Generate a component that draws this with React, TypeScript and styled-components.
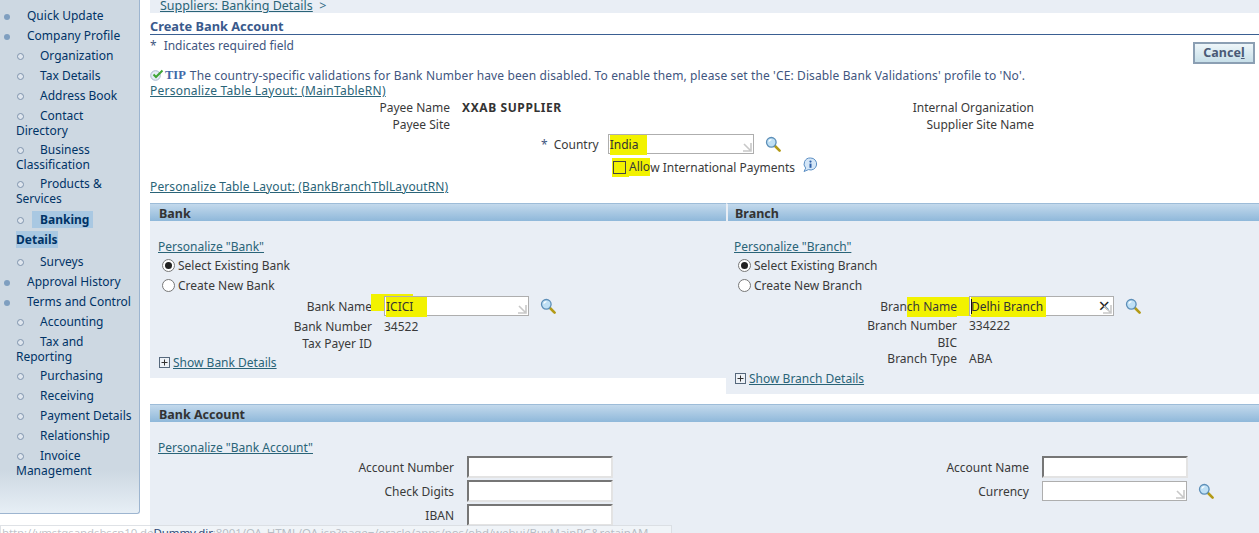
import React from "react";
import styled, { createGlobalStyle } from "styled-components";

const Global = createGlobalStyle`
  html, body { margin: 0; padding: 0; height: 533px; overflow: hidden; background: #fff; }
  #root { height: 533px; }
`;

const Page = styled.div`
  position: relative;
  display: flex;
  align-items: flex-start;
  width: 1259px;
  height: 533px;
  overflow: hidden;
  font-family: "Noto Sans", "Open Sans", sans-serif;
  font-size: 12px;
  line-height: 15px;
  color: #3a3a3a;
`;

const Sidebar = styled.nav`
  flex: none;
  box-sizing: border-box;
  width: 140px;
  height: 514px;
  padding-top: 8px;
  background: linear-gradient(#cdd8e2 0, #cdd8e2 470px, #e6eef5 512px);
  border-right: 1px solid #9db5d0;
  border-bottom: 1px solid #9db5d0;
  border-bottom-right-radius: 3px;
  color: #003366;
`;

const NavRow = styled.div<{ $level: number; $wrapped?: boolean }>`
  padding: 0 5px ${(p) => (p.$wrapped ? 4 : 5)}px ${(p) => (p.$level === 1 ? 3 : 16)}px;
`;

const Dot = styled.i<{ $level: number }>`
  display: inline-block;
  box-sizing: border-box;
  width: ${(p) => (p.$level === 1 ? 6 : 7)}px;
  height: ${(p) => (p.$level === 1 ? 6 : 7)}px;
  margin-right: ${(p) => (p.$level === 1 ? 17 : 16)}px;
  margin-left: 1px;
  vertical-align: 0;
  border-radius: 50%;
  ${(p) =>
    p.$level === 1
      ? "background:#7f9fc0;"
      : "border:1px solid #7f93ad;background:#dfe6ee;"}
`;

const Current = styled.b`
  padding-left: 8px;
  margin-left: -8px;
  background: #a9c8e2;
  color: #003366;
`;

const CurrentRow = styled(NavRow)`
  padding-right: 30px;
  padding-bottom: 4px;
  line-height: 20px;
`;

const Main = styled.main`
  flex: 1;
  min-width: 0;
  margin-left: 10px;
`;

const Crumbs = styled.div`
  height: 13px;
  overflow: hidden;
  padding-left: 10px;
  background: #e9eef5;
  font-size: 12.5px;
  line-height: 11px;
  color: #336b85;
`;

const A = styled.a<{ $spread?: number }>`
  color: #2a6478;
  text-decoration: underline;
  letter-spacing: ${(p) => p.$spread ?? 0}px;
`;

const Title = styled.h1`
  margin: 5px 0 0;
  height: 16px;
  font-size: 12.8px;
  line-height: 16px;
  font-weight: 700;
  color: #3a5a8c;
  border-bottom: 1px solid #3a5f92;
`;

const Required = styled.div`
  display: flex;
  justify-content: space-between;
  align-items: flex-start;
  height: 21px;
  padding: 3px 4px 0 0;
  color: #3f5680;
`;

const Star = styled.span`
  margin-right: 7px;
`;

const CancelButton = styled.button`
  flex: none;
  width: 62px;
  height: 22px;
  margin-top: 4px;
  padding: 0;
  border: 2px solid #8b9fb3;
  background: linear-gradient(#eef6f9, #c7dfe9);
  font: 700 12.5px/16px "Noto Sans", sans-serif;
  color: #4a5a76;
`;

const U = styled.span`
  text-decoration: underline;
`;

const Tip = styled.div`
  display: flex;
  align-items: center;
  height: 16px;
  margin-top: 8px;
  color: #3f5680;
  white-space: nowrap;
  letter-spacing: 0.12px;
`;

const TipWord = styled.b`
  margin: 0 4px 0 0;
  font-family: "Liberation Serif", serif;
  font-size: 12.5px;
  letter-spacing: 0;
  color: #3f68a8;
`;

const Line = styled.div<{ $h?: number }>`
  height: ${(p) => p.$h ?? 16}px;
  white-space: nowrap;
`;

const Payee = styled.div`
  display: grid;
  grid-template-columns: 300px 398px 162px 1fr;
  column-gap: 12px;
  grid-auto-rows: 17px;
  padding-top: 1px;
  height: 33px;
`;

const Label = styled.div`
  text-align: right;
  white-space: nowrap;
`;

const Strong = styled.b`
  color: #333;
  letter-spacing: 0.6px;
`;

const CountryRow = styled.div`
  display: flex;
  align-items: center;
  height: 22px;
  padding-left: 391px;
`;

const Req = styled.span`
  margin-right: 6px;
  color: #3f5680;
`;

const CountryLabel = styled.span`
  margin-right: 9px;
`;

const ComboBox = styled.div<{ $w?: number }>`
  position: relative;
  box-sizing: border-box;
  width: ${(p) => p.$w ?? 146}px;
  height: 20px;
  margin-right: 11px;
  padding: 2px 0 0 1px;
  background: #fff;
  border: 1px solid #aeaeae;
  line-height: 16px;
  white-space: nowrap;
  color: #333;
`;

const Corner = styled.svg`
  position: absolute;
  right: 1px;
  bottom: 1px;
`;

const Mark = styled.mark`
  background: #f2f200;
  color: inherit;
  padding: 1px 0 2px;
`;

const Tail = styled(Mark)<{ $tail: number }>`
  padding-right: ${(p) => p.$tail}px;
`;

const Swipe = styled.span<{ $left: number; $top: number; $w: number; $h: number }>`
  position: absolute;
  left: ${(p) => p.$left}px;
  top: ${(p) => p.$top}px;
  width: ${(p) => p.$w}px;
  height: ${(p) => p.$h}px;
  background: #f2f200;
`;

const ClearX = styled.span`
  position: absolute;
  right: 3px;
  top: 1px;
  font-size: 20px;
  line-height: 16px;
  color: #222;
`;

const Caret = styled.span`
  position: absolute;
  left: 1px;
  top: 2px;
  width: 1px;
  height: 15px;
  background: #111;
`;

const AllowRow = styled.div`
  display: flex;
  align-items: center;
  height: 24px;
  padding-left: 462px;
`;

const CheckMark = styled.span`
  display: inline-flex;
  align-items: center;
  padding-left: 1px;
  box-sizing: border-box;
  width: 17px;
  height: 19px;
  background: #f2f200;
`;

const Check = styled.span`
  display: block;
  box-sizing: border-box;
  width: 13px;
  height: 13px;
  border: 1px solid #444;
`;

const InfoWrap = styled.span`
  display: inline-flex;
  margin: 0 0 4px 7px;
`;

const Columns = styled.div`
  display: grid;
  grid-template-columns: 576px 1fr;
  align-items: start;
`;

const SectionHead = styled.h2<{ $divider?: boolean }>`
  margin: 0;
  box-sizing: border-box;
  height: 18px;
  padding-left: ${(p) => (p.$divider ? 7 : 9)}px;
  background: linear-gradient(#c3d9ec, #8fb8da);
  border-top: 1px solid #9dbcd8;
  ${(p) => (p.$divider ? "border-left: 2px solid #e9eef5;" : "")}
  font-size: 12.5px;
  line-height: 19px;
  font-weight: 700;
  color: #333;
`;

const SectionBody = styled.div<{ $h: number; $pad: number }>`
  box-sizing: border-box;
  height: ${(p) => p.$h}px;
  padding: 18px 0 0 ${(p) => p.$pad}px;
  background: #e9eef5;
`;

const RadioRow = styled.label`
  display: flex;
  align-items: center;
  height: 20px;
  padding-left: 4px;
  white-space: nowrap;
`;

const Radio = styled.span<{ $on?: boolean }>`
  display: inline-flex;
  align-items: center;
  justify-content: center;
  box-sizing: border-box;
  width: 13px;
  height: 13px;
  margin-right: 3px;
  border: 1px solid #777;
  border-radius: 50%;
  background: #fff;
  &::after {
    content: "";
    width: 7px;
    height: 7px;
    border-radius: 50%;
    background: ${(p) => (p.$on ? "#222" : "transparent")};
  }
`;

const FormRow = styled.div<{ $label: number; $h?: number }>`
  display: grid;
  grid-template-columns: ${(p) => p.$label}px auto;
  column-gap: 12px;
  align-items: center;
  justify-content: start;
  height: ${(p) => p.$h ?? 16}px;
  white-space: nowrap;
`;

const FieldRow = styled.div`
  position: relative;
  display: flex;
  align-items: center;
`;

const Disclosure = styled.div`
  display: flex;
  align-items: center;
  padding-left: 1px;
`;

const Plus = styled.svg`
  margin-right: 3px;
`;

const Spacer = styled.div<{ $h: number }>`
  height: ${(p) => p.$h}px;
`;

const Account = styled.div`
  display: grid;
  grid-template-columns: 304px 146px 403px 1fr;
  column-gap: 13px;
  grid-auto-rows: 24px;
  align-items: center;
  margin-left: -8px;
`;

const TextBox = styled.div`
  box-sizing: border-box;
  width: 146px;
  height: 22px;
  background: #fff;
  border: 2px solid;
  border-color: #767676 #e3e3e3 #e3e3e3 #767676;
`;

const StatusBar = styled.div`
  position: absolute;
  left: 0;
  bottom: -4px;
  box-sizing: border-box;
  width: 672px;
  height: 12px;
  padding-left: 1px;
  border: 1px solid rgba(210, 214, 220, 0.7);
  background: rgba(255, 255, 255, 0.35);
  font-size: 11.5px;
  letter-spacing: -0.1px;
  line-height: 14px;
  white-space: nowrap;
  overflow: hidden;
  color: rgba(90, 100, 115, 0.4);
`;

const StatusDark = styled.span`
  color: #2f4a78;
`;

const Lens = () => (
  <svg width="16" height="16" viewBox="0 0 16 16" aria-hidden="true">
    <path d="M10 10l4.6 4.6" stroke="#b39a16" strokeWidth="2.6" strokeLinecap="round" />
    <circle cx="6.3" cy="6.3" r="4.8" fill="#bfe0f5" stroke="#5d8fb8" strokeWidth="1.3" />
    <path d="M3.8 5.6a3 3 0 0 1 2.6-2" stroke="#fff" strokeWidth="1.2" fill="none" />
  </svg>
);

const Grip = () => (
  <Corner width="10" height="10" viewBox="0 0 10 10" aria-hidden="true">
    <path d="M1 9h8V1M2 2l7 7" stroke="#c8c8c8" strokeWidth="1.6" fill="none" />
  </Corner>
);

const PlusBox = () => (
  <Plus width="11" height="11" viewBox="0 0 11 11" aria-hidden="true">
    <rect x=".5" y=".5" width="10" height="10" fill="#eef2f7" stroke="#56687c" />
    <path d="M2.5 5.5h6M5.5 2.5v6" stroke="#333" />
  </Plus>
);

const TipIconSvg = styled.svg`
  margin-right: 1px;
`;

const TipIcon = () => (
  <TipIconSvg width="14" height="12" viewBox="0 0 14 12" aria-hidden="true">
    <circle cx="5.5" cy="6.5" r="4.8" fill="#e6edf6" stroke="#a8b8cc" />
    <path d="M3.5 5.5l2.5 2.5L12.5 1.5" stroke="#3fa535" strokeWidth="2" fill="none" />
  </TipIconSvg>
);

const InfoIcon = () => (
  <svg width="16" height="16" viewBox="0 0 16 16" aria-hidden="true">
    <path d="M8.5 1a6 6 0 1 1-2 11.6L2 14.5l1.7-3.4A6 6 0 0 1 8.5 1z" fill="#d4e6f7" stroke="#5c8fc4" />
    <circle cx="8.5" cy="4.6" r="1.1" fill="#2c5fa8" />
    <path d="M8.5 6.6v4.2" stroke="#2c5fa8" strokeWidth="2" />
  </svg>
);

type NavItem = { t: string; l: number; cur?: boolean; w?: boolean };
const nav: NavItem[] = [
  { t: "Quick Update", l: 1 },
  { t: "Company Profile", l: 1 },
  { t: "Organization", l: 2 },
  { t: "Tax Details", l: 2 },
  { t: "Address Book", l: 2 },
  { t: "Contact Directory", l: 2, w: true },
  { t: "Business Classification", l: 2, w: true },
  { t: "Products & Services", l: 2, w: true },
  { t: "Banking\u00a0 Details", l: 2, cur: true },
  { t: "Surveys", l: 2 },
  { t: "Approval History", l: 1 },
  { t: "Terms and Control", l: 1 },
  { t: "Accounting", l: 2 },
  { t: "Tax and Reporting", l: 2, w: true },
  { t: "Purchasing", l: 2 },
  { t: "Receiving", l: 2 },
  { t: "Payment Details", l: 2 },
  { t: "Relationship", l: 2 },
  { t: "Invoice Management", l: 2, w: true },
];

export default function App() {
  return (
    <Page>
      <Global />
      <Sidebar>
        {nav.map((n) =>
          n.cur ? (
            <CurrentRow key={n.t} $level={n.l}>
              <Dot $level={n.l} />
              <Current>{n.t}</Current>
            </CurrentRow>
          ) : (
            <NavRow key={n.t} $level={n.l} $wrapped={n.w}>
              <Dot $level={n.l} />
              {n.t}
            </NavRow>
          )
        )}
      </Sidebar>
      <Main>
        <Crumbs>
          <A>Suppliers: Banking Details</A>&nbsp;&nbsp;&gt;
        </Crumbs>
        <Title>Create Bank Account</Title>
        <Required>
          <span>
            <Star>*</Star>Indicates required field
          </span>
          <CancelButton>
            Cance<U>l</U>
          </CancelButton>
        </Required>
        <Tip>
          <TipIcon />
          <TipWord>TIP</TipWord>
          The country-specific validations for Bank Number have been disabled. To enable them, please set the 'CE: Disable Bank Validations' profile to 'No'.
        </Tip>
        <Line>
          <A $spread={0.23}>Personalize Table Layout: (MainTableRN)</A>
        </Line>
        <Payee>
          <Label>Payee Name</Label>
          <Strong>XXAB SUPPLIER</Strong>
          <Label>Internal Organization</Label>
          <span />
          <Label>Payee Site</Label>
          <span />
          <Label>Supplier Site Name</Label>
          <span />
        </Payee>
        <CountryRow>
          <Req>*</Req>
          <CountryLabel>Country</CountryLabel>
          <ComboBox>
            <Tail $tail={9}>India</Tail>
            <Grip />
          </ComboBox>
          <Lens />
        </CountryRow>
        <AllowRow>
          <CheckMark>
            <Check />
          </CheckMark>
          <Mark>Allo</Mark>w International Payments
          <InfoWrap>
            <InfoIcon />
          </InfoWrap>
        </AllowRow>
        <Line $h={24}>
          <A $spread={0.12}>Personalize Table Layout: (BankBranchTblLayoutRN)</A>
        </Line>
        <Columns>
          <div>
            <SectionHead>Bank</SectionHead>
            <SectionBody $h={157} $pad={8}>
              <Line>
                <A>Personalize "Bank"</A>
              </Line>
              <RadioRow>
                <Radio $on />
                Select Existing Bank
              </RadioRow>
              <RadioRow>
                <Radio />
                Create New Bank
              </RadioRow>
              <FormRow $label={214} $h={22}>
                <Label>Bank Name</Label>
                <FieldRow>
                  <Swipe $left={-13} $top={-2} $w={42} $h={17} />
                  <ComboBox $w={145}>
                    <Tail $tail={14}>ICICI</Tail>
                    <Grip />
                  </ComboBox>
                  <Lens />
                </FieldRow>
              </FormRow>
              <FormRow $label={214} $h={18}>
                <Label>Bank Number</Label>
                <span>34522</span>
              </FormRow>
              <FormRow $label={214}>
                <Label>Tax Payer ID</Label>
                <span />
              </FormRow>
              <Spacer $h={4} />
              <Disclosure>
                <PlusBox />
                <A>Show Bank Details</A>
              </Disclosure>
            </SectionBody>
          </div>
          <div>
            <SectionHead $divider>Branch</SectionHead>
            <SectionBody $h={173} $pad={8}>
              <Line>
                <A>Personalize "Branch"</A>
              </Line>
              <RadioRow>
                <Radio $on />
                Select Existing Branch
              </RadioRow>
              <RadioRow>
                <Radio />
                Create New Branch
              </RadioRow>
              <FormRow $label={223} $h={22}>
                <Label>
                  Bran<Mark>ch Name</Mark>
                </Label>
                <FieldRow>
                  <Swipe $left={-12} $top={1} $w={12} $h={19} />
                  <ComboBox $w={145}>
                    <Caret />
                    <Tail $tail={3}>Delhi Branch</Tail>
                    <ClearX>×</ClearX>
                    <Grip />
                  </ComboBox>
                  <Lens />
                </FieldRow>
              </FormRow>
              <FormRow $label={223} $h={17}>
                <Label>Branch Number</Label>
                <span>334222</span>
              </FormRow>
              <FormRow $label={223}>
                <Label>BIC</Label>
                <span />
              </FormRow>
              <FormRow $label={223}>
                <Label>Branch Type</Label>
                <span>ABA</span>
              </FormRow>
              <Spacer $h={5} />
              <Disclosure>
                <PlusBox />
                <A>Show Branch Details</A>
              </Disclosure>
            </SectionBody>
          </div>
        </Columns>
        <Spacer $h={10} />
        <SectionHead>Bank Account</SectionHead>
        <SectionBody $h={120} $pad={8}>
          <Line $h={15}>
            <A>Personalize "Bank Account"</A>
          </Line>
          <Account>
            <Label>Account Number</Label>
            <TextBox />
            <Label>Account Name</Label>
            <TextBox />
            <Label>Check Digits</Label>
            <TextBox />
            <Label>Currency</Label>
            <FieldRow>
              <ComboBox $w={145}>
                <Grip />
              </ComboBox>
              <Lens />
            </FieldRow>
            <Label>IBAN</Label>
            <TextBox />
          </Account>
        </SectionBody>
      </Main>
      <StatusBar>
        http://vmstgsandsbscp10.de<StatusDark>Dummy.dir</StatusDark>:8001/OA_HTML/OA.jsp?page=/oracle/apps/pos/obd/webui/BuyMainPG&retainAM
      </StatusBar>
    </Page>
  );
}
